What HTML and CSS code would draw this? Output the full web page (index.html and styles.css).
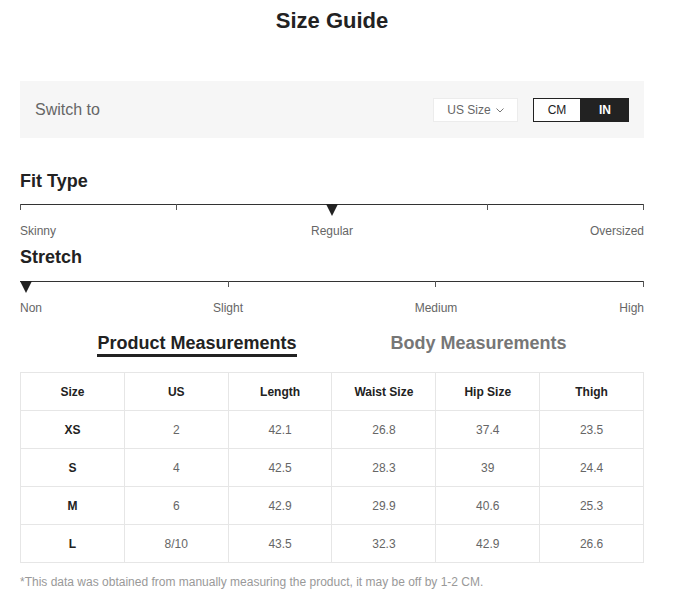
FILE: index.html
```html
<!DOCTYPE html>
<html lang="en">
<head>
<meta charset="utf-8">
<title>Size Guide</title>
<link rel="stylesheet" href="styles.css">
</head>
<body>
<div class="page">
  <h1 class="title">Size Guide</h1>

  <div class="switch-bar">
    <span class="switch-label">Switch to</span>
    <div class="switch-controls">
      <div class="size-select">
        <span>US Size</span>
        <svg class="chevron" width="8" height="5" viewBox="0 0 8 5"><path d="M0.5 0.5 L4 4 L7.5 0.5" fill="none" stroke="#666" stroke-width="0.9"/></svg>
      </div>
      <div class="unit-toggle">
        <span class="unit">CM</span>
        <span class="unit unit-active">IN</span>
      </div>
    </div>
  </div>

  <section class="scale-section">
    <h2 class="scale-title">Fit Type</h2>
    <div class="scale-track">
      <span class="tick"></span>
      <span class="tick"></span>
      <span class="tick tick-marker"></span>
      <span class="tick"></span>
      <span class="tick"></span>
    </div>
    <div class="scale-labels labels-fit">
      <span class="lbl-left">Skinny</span>
      <span class="lbl-center">Regular</span>
      <span class="lbl-right">Oversized</span>
    </div>
  </section>

  <section class="scale-section scale-section-2">
    <h2 class="scale-title">Stretch</h2>
    <div class="scale-track">
      <span class="tick tick-marker tick-marker-start"></span>
      <span class="tick"></span>
      <span class="tick"></span>
      <span class="tick"></span>
    </div>
    <div class="scale-labels labels-stretch">
      <span class="lbl-left">Non</span>
      <span class="lbl-center">Slight</span>
      <span class="lbl-center">Medium</span>
      <span class="lbl-right">High</span>
    </div>
  </section>

  <div class="tabs">
    <span class="tab tab-active">Product Measurements</span>
    <span class="tab">Body Measurements</span>
  </div>

  <table class="size-table">
    <thead>
      <tr><th>Size</th><th>US</th><th>Length</th><th>Waist Size</th><th>Hip Size</th><th>Thigh</th></tr>
    </thead>
    <tbody>
      <tr><td class="size-cell">XS</td><td>2</td><td>42.1</td><td>26.8</td><td>37.4</td><td>23.5</td></tr>
      <tr><td class="size-cell">S</td><td>4</td><td>42.5</td><td>28.3</td><td>39</td><td>24.4</td></tr>
      <tr><td class="size-cell">M</td><td>6</td><td>42.9</td><td>29.9</td><td>40.6</td><td>25.3</td></tr>
      <tr><td class="size-cell">L</td><td>8/10</td><td>43.5</td><td>32.3</td><td>42.9</td><td>26.6</td></tr>
    </tbody>
  </table>

  <p class="note">*This data was obtained from manually measuring the product, it may be off by 1-2 CM.</p>
</div>
</body>
</html>
```

FILE: styles.css
```css
* { box-sizing: border-box; }

body {
  margin: 0;
  background: #fff;
  font-family: "Liberation Sans", Arial, sans-serif;
  color: #222;
}

.page {
  width: 644px;
  padding-left: 20px;
}

.title {
  margin: 0;
  padding-top: 8px;
  font-size: 22px;
  line-height: 26px;
  font-weight: bold;
  text-align: center;
  color: #222;
}

.switch-bar {
  margin-top: 47px;
  height: 57px;
  background: #f6f6f6;
  display: flex;
  align-items: center;
  justify-content: space-between;
  padding: 0 15px 0 15px;
}

.switch-label {
  font-size: 16px;
  color: #666;
}

.switch-controls {
  display: flex;
  align-items: center;
  gap: 15px;
}

.size-select {
  width: 85px;
  height: 24px;
  background: #fff;
  border: 1px solid #ececec;
  display: flex;
  align-items: center;
  justify-content: center;
  gap: 5px;
  font-size: 12px;
  color: #666;
}

.chevron { margin-top: 1px; }

.unit-toggle {
  display: flex;
  height: 24px;
}

.unit {
  width: 48px;
  display: flex;
  align-items: center;
  justify-content: center;
  font-size: 12px;
  color: #222;
  border: 1px solid #222;
  background: #fff;
}

.unit-active {
  background: #222;
  color: #fff;
  font-weight: bold;
}

.scale-section { margin-top: 32px; }
.scale-section-2 { margin-top: 7px; }

.scale-title {
  margin: 0;
  font-size: 18px;
  line-height: 22px;
  font-weight: bold;
  color: #222;
}

.scale-track {
  margin-top: 12px;
  height: 1px;
  background: #333;
  display: flex;
  justify-content: space-between;
  align-items: flex-start;
}

.scale-section-2 .scale-track { margin-top: 13px; }

.tick {
  width: 1px;
  height: 6px;
  background: #555;
  position: relative;
}

.tick-marker { background: transparent; }

.tick-marker::after {
  content: "";
  position: absolute;
  top: 0;
  left: -6px;
  width: 0;
  height: 0;
  border-left: 6.5px solid transparent;
  border-right: 6.5px solid transparent;
  border-top: 12px solid #222;
}

.tick-marker-start::after { left: 0; }

.scale-labels {
  margin-top: 18px;
  display: grid;
  font-size: 12px;
  line-height: 16px;
  color: #666;
}

.labels-fit { grid-template-columns: 1fr 1fr 1fr; }
.labels-stretch { grid-template-columns: 104px 208px 208px 104px; }

.lbl-left { text-align: left; }
.lbl-center { text-align: center; }
.lbl-right { text-align: right; }

.tabs {
  margin-top: 17px;
  display: flex;
  justify-content: center;
  gap: 94px;
}

.tab {
  font-size: 18px;
  line-height: 21px;
  font-weight: bold;
  color: #767676;
  border-bottom: 3px solid transparent;
}

.tab-active {
  color: #222;
  border-bottom-color: #222;
}

.size-table {
  margin-top: 15px;
  width: 624px;
  border-collapse: collapse;
  table-layout: fixed;
  font-size: 12px;
}

.size-table th,
.size-table td {
  height: 38px;
  padding: 0;
  border: 1px solid #e6e6e6;
  text-align: center;
  vertical-align: middle;
}

.size-table th {
  font-weight: bold;
  color: #222;
}

.size-table td { color: #666; }

.size-table td.size-cell {
  font-weight: bold;
  color: #222;
}

.note {
  margin: 11px 0 0;
  font-size: 12px;
  line-height: 16px;
  color: #999;
}
```
